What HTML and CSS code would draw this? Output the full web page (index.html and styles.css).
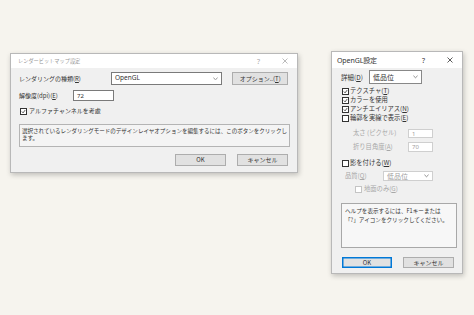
FILE: index.html
```html
<!DOCTYPE html>
<html lang="ja">
<head>
<meta charset="utf-8">
<link rel="stylesheet" href="styles.css">
</head>
<body>
<div class="desk">
  <div class="dlg dlg-a">
    <div class="titlebar tb-a">
      <span class="title">レンダービットマップ設定</span>
      <span class="tb-q q-a">?</span>
      <svg class="tb-x x-a" viewBox="0 0 6 6"><path d="M0.5 0.5 L5.5 5.5 M5.5 0.5 L0.5 5.5" /></svg>
    </div>
    <div class="body body-a">
      <div class="row a-r1">
        <span class="lbl w92">レンダリングの種類(<u>R</u>)</span>
        <div class="select sel-a">OpenGL<svg class="chev" viewBox="0 0 6 4"><path d="M0.5 0.8 L3 3.2 L5.5 0.8"/></svg></div>
        <span class="btn btn-opt">オプション..(<u>T</u>)</span>
      </div>
      <div class="row a-r2">
        <span class="lbl w54">解像度(dpi)(<u>E</u>)</span>
        <div class="input in-dpi">72</div>
      </div>
      <div class="row a-r3">
        <span class="cb on"><svg viewBox="0 0 6 6"><path d="M1 3 L2.5 4.6 L5 1.3"/></svg></span>
        <span class="lbl">アルファチャンネルを考慮</span>
      </div>
      <div class="desc desc-a">選択されているレンダリングモードのデザインレイヤオプションを編集するには、このボタンをクリックします。</div>
      <div class="btnrow a-btns">
        <span class="btn btn-a">OK</span>
        <span class="btn btn-a">キャンセル</span>
      </div>
    </div>
  </div>

  <div class="dlg dlg-b">
    <div class="titlebar tb-b">
      <span class="title title-b">OpenGL設定</span>
      <span class="tb-q q-b">?</span>
      <svg class="tb-x x-b" viewBox="0 0 6 6"><path d="M0.5 0.5 L5.5 5.5 M5.5 0.5 L0.5 5.5" /></svg>
    </div>
    <div class="body body-b">
      <div class="row b-r1">
        <span class="lbl w28">詳細(<u>D</u>)</span>
        <div class="select sel-b">低品位<svg class="chev" viewBox="0 0 6 4"><path d="M0.5 0.8 L3 3.2 L5.5 0.8"/></svg></div>
      </div>
      <div class="row ck first">
        <span class="cb on"><svg viewBox="0 0 6 6"><path d="M1 3 L2.5 4.6 L5 1.3"/></svg></span>
        <span class="lbl">テクスチャ(<u>T</u>)</span>
      </div>
      <div class="row ck">
        <span class="cb on"><svg viewBox="0 0 6 6"><path d="M1 3 L2.5 4.6 L5 1.3"/></svg></span>
        <span class="lbl">カラーを使用</span>
      </div>
      <div class="row ck">
        <span class="cb on"><svg viewBox="0 0 6 6"><path d="M1 3 L2.5 4.6 L5 1.3"/></svg></span>
        <span class="lbl">アンチエイリアス(<u>N</u>)</span>
      </div>
      <div class="row ck">
        <span class="cb"></span>
        <span class="lbl">輪郭を実線で表示(<u>E</u>)</span>
      </div>
      <div class="row b-thick dis">
        <span class="lbl w55">太さ (ピクセル)</span>
        <div class="input in-small dis-in">1</div>
      </div>
      <div class="row b-fold dis">
        <span class="lbl w55">折り目角度(<u>A</u>)</span>
        <div class="input in-small dis-in">70</div>
      </div>
      <div class="row ck b-shadow">
        <span class="cb"></span>
        <span class="lbl">影を付ける(<u>W</u>)</span>
      </div>
      <div class="row b-qual dis">
        <span class="lbl w38">品質(<u>Q</u>)</span>
        <div class="select sel-q dis-in">低品位<svg class="chev" viewBox="0 0 6 4"><path d="M0.5 0.8 L3 3.2 L5.5 0.8"/></svg></div>
      </div>
      <div class="row ck b-ground dis">
        <span class="cb dis-cb"></span>
        <span class="lbl">地面のみ(<u>G</u>)</span>
      </div>
      <div class="desc desc-b">ヘルプを表示するには、F1キーまたは<br>「?」アイコンをクリックしてください。</div>
      <div class="btnrow b-btns">
        <span class="btn btn-b default">OK</span>
        <span class="btn btn-b2">キャンセル</span>
      </div>
    </div>
  </div>
</div>
</body>
</html>
```

FILE: styles.css
```css
* { box-sizing: border-box; }
html, body {
  margin: 0;
  padding: 0;
  background: #f6f4ee;
  width: 474px;
  height: 315px;
  overflow: hidden;
}
body {
  font-family: "Noto Sans CJK JP", "Noto Sans", sans-serif;
  font-size: 6px;
  line-height: 1;
  color: #333;
}
u { text-decoration: underline; text-underline-offset: 1px; }

.desk {
  display: flex;
  align-items: flex-start;
  padding-left: 10px;
  gap: 33px;
}

.dlg {
  background: #f0f0f0;
  border: 1px solid #b8b8b8;
  box-shadow: 1px 2px 5px rgba(0,0,0,0.22);
  display: flex;
  flex-direction: column;
}
.dlg-a { margin-top: 53px; width: 288px; height: 120px; }
.dlg-b { margin-top: 51px; width: 132px; height: 223px; }

.titlebar {
  background: #ffffff;
  display: flex;
  align-items: center;
  position: relative;
}
.tb-a { height: 14px; padding-left: 7px; }
.tb-b { height: 16px; padding-left: 5px; }
.title { color: #9a9a9a; font-size: 5.2px; }
.title-b { color: #333; font-size: 7px; font-family: "Noto Sans", "Noto Sans CJK JP", sans-serif; letter-spacing: -0.1px; }
.tb-q { position: absolute; font-family: "Noto Sans", sans-serif; font-size: 7px; top: 50%; transform: translateY(-50%); }
.tb-x { position: absolute; width: 6px; height: 6px; top: 50%; margin-top: -3px; fill: none; stroke-width: 0.8; }
.q-a { left: 246px; color: #aaa; }
.x-a { left: 271px; stroke: #aaa; }
.q-b { left: 90px; color: #333; }
.x-b { left: 115px; stroke: #333; }

.body { display: flex; flex-direction: column; flex: 1; }
.body-a { padding: 0 9px 0 8px; }
.body-b { padding: 0 0 0 9px; }

.row { display: flex; align-items: center; flex-shrink: 0; }
.lbl { white-space: nowrap; flex-shrink: 0; }
.w92 { width: 92px; }
.w54 { width: 54px; }
.w28 { width: 28px; }
.w55 { width: 55px; }
.w38 { width: 38px; }

.select {
  background: #fff;
  border: 1px solid #7a7a7a;
  display: flex;
  align-items: center;
  justify-content: space-between;
  padding: 0 3px 0 3px;
  height: 100%;
  font-family: "Noto Sans", "Noto Sans CJK JP", sans-serif;
}
.chev { width: 5px; height: 3.5px; fill: none; stroke: #555; stroke-width: 0.8; }
.sel-a { width: 112px; font-size: 6.5px; }
.sel-b { width: 53px; font-size: 7px; border-color: #888; font-family: "Noto Sans CJK JP", sans-serif; }
.sel-q { width: 50px; font-size: 7px; font-family: "Noto Sans CJK JP", sans-serif; }

.input {
  background: #fff;
  border: 1px solid #7a7a7a;
  height: 100%;
  display: flex;
  align-items: center;
  padding-left: 3px;
  font-family: "Noto Sans", sans-serif;
}
.in-dpi { width: 41px; }
.in-small { width: 25px; }

.btn {
  display: flex;
  align-items: center;
  justify-content: center;
  background: #e1e1e1;
  border: 1px solid #adadad;
  white-space: nowrap;
}
.btn-opt { width: 56px; height: 100%; margin-left: 10px; }

.a-r1 { margin-top: 4px; height: 13px; }
.a-r2 { margin-top: 5px; height: 11px; }
.a-r3 { margin-top: 4px; height: 12px; }
.a-r3 .cb { margin-left: 1px; margin-right: 2px; }

.cb {
  width: 7px;
  height: 7px;
  border: 1px solid #333;
  background: #fff;
  flex-shrink: 0;
  display: flex;
}
.cb svg { width: 100%; height: 100%; fill: none; stroke: #222; stroke-width: 0.9; }
.dis-cb { border-color: #c4c4c4; }

.desc {
  border: 1px solid #b4b4b4;
  background: #f4f4f4;
  flex-shrink: 0;
}
.desc-a { margin-top: 7px; height: 23px; width: 271px; padding: 3px 2px; font-size: 5.55px; line-height: 1.2; letter-spacing: -0.02px; }

.btnrow { display: flex; flex-shrink: 0; gap: 11px; }
.a-btns { margin-top: 7px; height: 12px; justify-content: flex-end; }
.btn-a { width: 51px; height: 100%; }

.b-r1 { margin-top: 2px; height: 14px; }
.b-r1 .lbl { font-size: 6.5px; }
.ck { height: 9px; }
.ck .cb { margin-left: 1px; margin-right: 1px; }
.ck .lbl { font-size: 6.3px; }
.ck.first { margin-top: 3px; }
.b-thick { margin-top: 6px; height: 9px; padding-left: 12px; }
.b-fold { margin-top: 4px; height: 10px; padding-left: 12px; }
.dis { color: #a8a8a8; }
.dis .lbl { font-size: 6.3px; }
.dis-in { border-color: #cfcfcf; color: #a0a0a0; }
.b-shadow { margin-top: 7px; }
.b-qual { margin-top: 3px; height: 10px; padding-left: 4px; }
.b-ground { margin-top: 4px; padding-left: 13px; }
.b-ground .cb { margin-right: 2px; }
.desc-b { margin-top: 9px; height: 45px; width: 116px; padding: 3px 3px; font-size: 5.6px; line-height: 1.6; background: #f7f7f7; border-color: #a8a8a8; }

.b-btns { margin-top: 9px; height: 11px; padding-left: 1px; }
.btn-b { width: 50px; height: 100%; }
.btn-b2 { width: 51px; height: 100%; }
.default { border: 1px solid #0078d7; box-shadow: inset 0 0 0 0.5px #0078d7; }
```
